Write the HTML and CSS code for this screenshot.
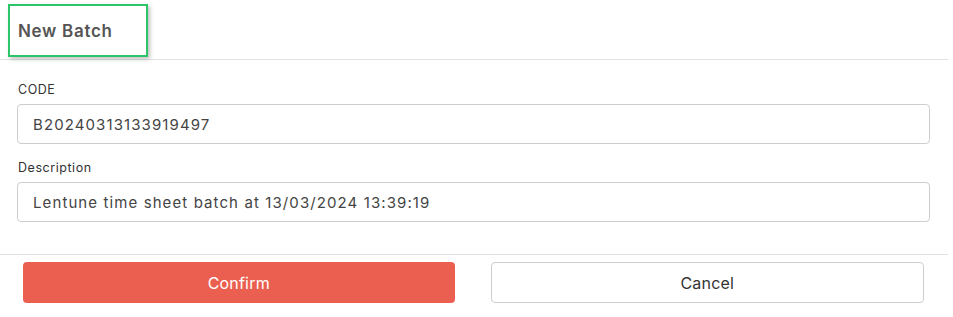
FILE: index.html
```html
<!DOCTYPE html>
<html lang="en">
<head>
    <meta charset="UTF-8">
    <meta name="viewport" content="width=device-width, initial-scale=1.0">
    <title>New Batch</title>
    <link rel="stylesheet" href="styles.css">
</head>
<body>

    <div class="modal">
        <div class="modal-header">
            <div class="titlu">New Batch</div>
        </div>

        <div class="modal-body">
            <div class="camp">
                <label>CODE</label>
                <div class="input">B20240313133919497</div>
            </div>
            <div class="camp">
                <label>Description</label>
                <div class="input">Lentune time sheet batch at 13/03/2024 13:39:19</div>
            </div>
        </div>

        <div class="modal-footer">
            <button class="buton confirma">Confirm</button>
            <button class="buton anuleaza">Cancel</button>
        </div>
    </div>

</body>
</html>
```

FILE: styles.css
```css
body {
    margin: 0;
    background-color: white;
    font-family: Inter, "Open Sans", sans-serif;
    color: #333;
}
.modal {
    width: 948px;
}
.modal-header {
    padding: 4px 0 2px 8px;
    border-bottom: 1px solid #e3e3e3;
}
.titlu {
    width: 128px;
    height: 49px;
    padding-left: 8px;
    display: flex;
    align-items: center;
    font-size: 17px;
    font-weight: 600;
    letter-spacing: 0.7px;
    color: #555;
    border: 2px solid #2cc56a;
    box-shadow: 2px 2px 4px rgba(0, 0, 0, 0.25);
}
.modal-body {
    padding: 22px 18px 32px 17px;
}
.camp {
    margin-bottom: 16px;
}
.camp:last-child {
    margin-bottom: 0;
}
.camp label {
    display: block;
    font-size: 12.5px;
    letter-spacing: 0.55px;
    line-height: 16px;
    margin-bottom: 6px;
    padding-left: 1px;
    color: #333;
}
.input {
    height: 38px;
    border: 1px solid #cdcdcd;
    border-radius: 4px;
    padding-left: 15px;
    display: flex;
    align-items: center;
    font-size: 15px;
    letter-spacing: 1.1px;
    color: #444;
}
.modal-footer {
    border-top: 1px solid #e3e3e3;
    padding: 7px 24px 0 23px;
    display: flex;
    gap: 36px;
}
.buton {
    flex: 1;
    height: 41px;
    border-radius: 4px;
    font-family: Inter, "Open Sans", sans-serif;
    font-size: 16px;
    letter-spacing: 0.2px;
}
.buton.confirma {
    background-color: #eb5f50;
    border: none;
    color: white;
}
.buton.anuleaza {
    background-color: white;
    border: 1px solid #cdcdcd;
    color: #333;
}
```
